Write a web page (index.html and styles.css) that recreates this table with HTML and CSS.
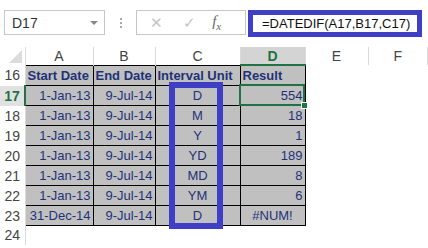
FILE: index.html
```html
<!doctype html>
<html>
<head>
	<title>DATEDIF examples</title>
	<link rel="stylesheet" href="styles.css">
</head>
<body>
<div class="toolbar">
	<div class="namebox"><span>D17</span><span class="arrow"></span></div>
	<div class="grip"><i></i><i></i><i></i></div>
	<div class="fbuttons">
		<span class="btn">&#x2715;</span>
		<span class="btn check">&#x2713;</span>
		<span class="btn fx">f<sub>x</sub></span>
	</div>
	<div class="formula">=DATEDIF(A17,B17,C17)</div>
</div>

<div class="sheet">
<table class="grid">
	<colgroup>
		<col class="c-row"><col class="c-a"><col class="c-b"><col class="c-c"><col class="c-d"><col class="c-e"><col>
	</colgroup>
	<tr class="colhead">
		<th class="corner"><span></span></th><th>A</th><th>B</th><th>C</th><th class="active">D</th><th>E</th><th>F</th>
	</tr>
	<tr>
		<th class="rh">16</th>
		<td class="cell hd">Start Date</td><td class="cell hd">End Date</td><td class="cell hd">Interval Unit</td><td class="cell hd">Result</td><td></td><td></td>
	</tr>
	<tr>
		<th class="rh active">17</th>
		<td class="cell r">1-Jan-13</td><td class="cell r">9-Jul-14</td><td class="cell c">D</td><td class="cell r">554</td><td></td><td></td>
	</tr>
	<tr>
		<th class="rh">18</th>
		<td class="cell r">1-Jan-13</td><td class="cell r">9-Jul-14</td><td class="cell c">M</td><td class="cell r">18</td><td></td><td></td>
	</tr>
	<tr>
		<th class="rh">19</th>
		<td class="cell r">1-Jan-13</td><td class="cell r">9-Jul-14</td><td class="cell c">Y</td><td class="cell r">1</td><td></td><td></td>
	</tr>
	<tr>
		<th class="rh">20</th>
		<td class="cell r">1-Jan-13</td><td class="cell r">9-Jul-14</td><td class="cell c">YD</td><td class="cell r">189</td><td></td><td></td>
	</tr>
	<tr>
		<th class="rh">21</th>
		<td class="cell r">1-Jan-13</td><td class="cell r">9-Jul-14</td><td class="cell c">MD</td><td class="cell r">8</td><td></td><td></td>
	</tr>
	<tr>
		<th class="rh">22</th>
		<td class="cell r">1-Jan-13</td><td class="cell r">9-Jul-14</td><td class="cell c">YM</td><td class="cell r">6</td><td></td><td></td>
	</tr>
	<tr>
		<th class="rh">23</th>
		<td class="cell r">31-Dec-14</td><td class="cell r">9-Jul-14</td><td class="cell c">D</td><td class="cell c">#NUM!</td><td></td><td></td>
	</tr>
	<tr>
		<th class="rh">24</th>
		<td></td><td></td><td></td><td></td><td></td><td></td>
	</tr>
</table>
<div class="highlight"></div>
<div class="selection"><span class="handle"></span></div>
</div>
</body>
</html>
```

FILE: styles.css
```css
body {
	margin: 0;
	background: #fff;
	font-family: "Liberation Sans", Arial, sans-serif;
	color: #222;
}

/* formula bar */
.toolbar {
	display: flex;
	align-items: flex-start;
	padding: 10px 0 0 4px;
	height: 37px;
	box-sizing: border-box;
}
.namebox {
	width: 101px;
	height: 25px;
	box-sizing: border-box;
	border: 1px solid #c6c6c6;
	display: flex;
	align-items: center;
	justify-content: space-between;
	padding: 0 6px 0 7px;
	font-size: 14px;
	color: #333;
}
.namebox .arrow {
	width: 0;
	height: 0;
	border-left: 4px solid transparent;
	border-right: 4px solid transparent;
	border-top: 4px solid #888;
}
.grip {
	width: 31px;
	height: 25px;
	display: flex;
	flex-direction: column;
	align-items: center;
	justify-content: center;
	gap: 2px;
}
.grip i {
	display: block;
	width: 2px;
	height: 2px;
	background: #aaa;
}
.fbuttons {
	width: 110px;
	height: 25px;
	box-sizing: border-box;
	border: 1px solid #c6c6c6;
	display: flex;
	align-items: center;
	padding-left: 13px;
	font-size: 15px;
	color: #c4c4c4;
}
.fbuttons .btn {
	width: 37px;
}
.fbuttons .check {
	width: 33px;
}
.fbuttons .fx {
	font-family: "Liberation Serif", serif;
	font-style: italic;
	font-size: 15px;
	color: #666;
}
.fbuttons .fx sub {
	font-size: 11px;
}
.formula {
	margin-left: 2px;
	width: 174px;
	height: 27px;
	box-sizing: border-box;
	border: 5px solid #3f3fc6;
	padding-left: 9px;
	font-size: 13px;
	line-height: 17px;
	color: #111;
	white-space: nowrap;
	overflow: hidden;
}

/* sheet */
.sheet {
	position: relative;
	margin-top: 10px;
}
.grid {
	border-collapse: collapse;
	table-layout: fixed;
	width: 428px;
	font-size: 13px;
}
.c-row { width: 25px; }
.c-a { width: 68px; }
.c-b { width: 62px; }
.c-c { width: 85px; }
.c-d { width: 65px; }
.c-e { width: 63px; }

.grid td, .grid th {
	padding: 0;
	height: 19px;
	white-space: nowrap;
	overflow: hidden;
}
.colhead th {
	height: 17px;
	font-weight: normal;
	font-size: 14px;
	color: #444;
	border-right: 1px solid #dadada;
	text-align: center;
}
.colhead th.active {
	background: #d4d4d4;
	color: #217346;
	font-weight: bold;
	border-bottom: 2px solid #217346;
}
.corner {
	position: relative;
}
.corner span {
	position: absolute;
	right: 3px;
	bottom: 2px;
	width: 0;
	height: 0;
	border-left: 13px solid transparent;
	border-bottom: 13px solid #dcdcdc;
}
.rh {
	font-weight: normal;
	font-size: 14px;
	color: #444;
	text-align: center;
	border-right: 1px solid #dadada;
}
.rh.active {
	background: #e1e1e1;
	color: #217346;
	font-weight: bold;
	border-right: 2px solid #217346;
}
.cell {
	background: #c0c0c0;
	border: 1px solid #000;
	color: #1f3278;
}
.cell.hd {
	font-weight: bold;
	padding-left: 2px;
}
.cell.r {
	text-align: right;
	padding-right: 2px;
}
.cell.c {
	text-align: center;
}

/* overlays */
.highlight {
	position: absolute;
	left: 169px;
	top: 35px;
	width: 54px;
	height: 147px;
	box-sizing: border-box;
	border: 6px solid #3f3fc6;
}
.selection {
	position: absolute;
	left: 239px;
	top: 37px;
	width: 66px;
	height: 22px;
	box-sizing: border-box;
	border: 2px solid #217346;
}
.selection .handle {
	position: absolute;
	right: -5px;
	bottom: -5px;
	width: 5px;
	height: 5px;
	background: #217346;
	border: 1px solid #fff;
}
```
